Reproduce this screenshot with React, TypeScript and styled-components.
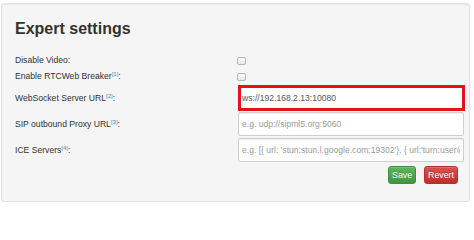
import React from "react";
import styled, { createGlobalStyle } from "styled-components";

const Global = createGlobalStyle`
  html, body { margin: 0; padding: 0; background: #ffffff; }
  body { font-family: "Liberation Sans", Arial, sans-serif; color: #333; }
  * { box-sizing: border-box; }
`;

const Well = styled.div`
  margin: 3px 0 0 1px;
  width: 469px;
  height: 199px;
  background: #f5f5f5;
  border: 1px solid #e3e3e3;
  border-radius: 3px;
  box-shadow: inset 0 1px 1px rgba(0, 0, 0, 0.05);
  padding: 16px 5px 0 13px;
  display: flex;
  flex-direction: column;
`;

const Title = styled.h2`
  margin: 0;
  font-size: 16px;
  line-height: 18px;
  font-weight: 700;
  color: #333;
`;

const Form = styled.div`
  margin-top: 13.5px;
  display: flex;
  flex-direction: column;
`;

const Group = styled.div<{ $gap: number; $top: number }>`
  display: flex;
  flex-direction: column;
  gap: ${(p) => p.$gap}px;
  margin-top: ${(p) => p.$top}px;
`;

const Row = styled.div<{ $h: number }>`
  display: grid;
  grid-template-columns: 223px 226px;
  align-items: center;
  height: ${(p) => p.$h}px;
`;

const Label = styled.label`
  font-size: 8.6px;
  line-height: 10px;
  color: #333;
  white-space: nowrap;
`;

const Ref = styled.sup`
  font-size: 6px;
  color: #428bca;
  vertical-align: 3px;
  line-height: 0;
`;

const Check = styled.span`
  display: block;
  width: 9px;
  height: 8px;
  margin: 3px 0 0 -1px;
  border: 1px solid #b4b4b4;
  border-radius: 2px;
  background: linear-gradient(#ffffff, #e6e6e6);
`;

const Field = styled.div<{ $marked?: boolean }>`
  position: relative;
  height: 24px;
  &::after {
    content: "";
    display: ${(p) => (p.$marked ? "block" : "none")};
    position: absolute;
    top: -1px;
    left: 0;
    right: -1px;
    bottom: -1px;
    border: 3px solid #e5121c;
    pointer-events: none;
  }
`;

const Input = styled.input`
  display: block;
  height: 24px;
  width: 100%;
  margin: 0;
  background: #fff;
  border: 1px solid #cfcfcf;
  border-radius: 2px;
  box-shadow: inset 0 1px 1px rgba(0, 0, 0, 0.075);
  padding: 0 3px;
  font-family: "Liberation Sans", Arial, sans-serif;
  font-size: 8.6px;
  color: #555;
  outline: none;
  &::placeholder {
    color: #9a9a9a;
    opacity: 1;
  }
`;

const Actions = styled.div`
  margin-top: 4px;
  display: grid;
  grid-template-columns: 223px 226px;
`;

const ButtonBar = styled.div`
  grid-column: 2;
  display: flex;
  justify-content: flex-end;
  gap: 8px;
  padding-right: 6px;
`;

const Button = styled.button<{ $tone: "save" | "revert" }>`
  height: 18px;
  padding: 0 3px;
  font-family: "Liberation Sans", Arial, sans-serif;
  font-size: 8.8px;
  color: #fff;
  border-radius: 3px;
  border: 1px solid ${(p) => (p.$tone === "save" ? "#3e8f3e" : "#b92c28")};
  background: ${(p) =>
    p.$tone === "save"
      ? "linear-gradient(#5cb85c, #419641)"
      : "linear-gradient(#d9534f, #c12e2a)"};
  box-shadow: inset 0 1px 0 rgba(255, 255, 255, 0.15);
  text-shadow: 0 -1px 0 rgba(0, 0, 0, 0.2);
`;

export default function App() {
  return (
    <>
      <Global />
      <Well>
        <Title>Expert settings</Title>
        <Form>
          <Group $gap={0} $top={0}>
            <Row $h={16}>
              <Label>Disable Video:</Label>
              <Check />
            </Row>
            <Row $h={16}>
              <Label>
                Enable RTCWeb Breaker<Ref>[1]</Ref>:
              </Label>
              <Check />
            </Row>
          </Group>
          <Group $gap={2} $top={2}>
            <Row $h={24}>
              <Label>
                WebSocket Server URL<Ref>[2]</Ref>:
              </Label>
              <Field $marked>
                <Input readOnly value="ws://192.168.2.13:10080" />
              </Field>
            </Row>
            <Row $h={24}>
              <Label>
                SIP outbound Proxy URL<Ref>[3]</Ref>:
              </Label>
              <Field>
                <Input readOnly placeholder="e.g. udp://sipml5.org:5060" />
              </Field>
            </Row>
            <Row $h={24}>
              <Label>
                ICE Servers<Ref>[4]</Ref>:
              </Label>
              <Field>
                <Input
                  readOnly
                  placeholder="e.g. [{ url: 'stun:stun.l.google.com:19302'}, { url:'turn:user@numb.viagenie.ca', credential:'myPassword'}]"
                />
              </Field>
            </Row>
          </Group>
          <Actions>
            <ButtonBar>
              <Button $tone="save">Save</Button>
              <Button $tone="revert">Revert</Button>
            </ButtonBar>
          </Actions>
        </Form>
      </Well>
    </>
  );
}
